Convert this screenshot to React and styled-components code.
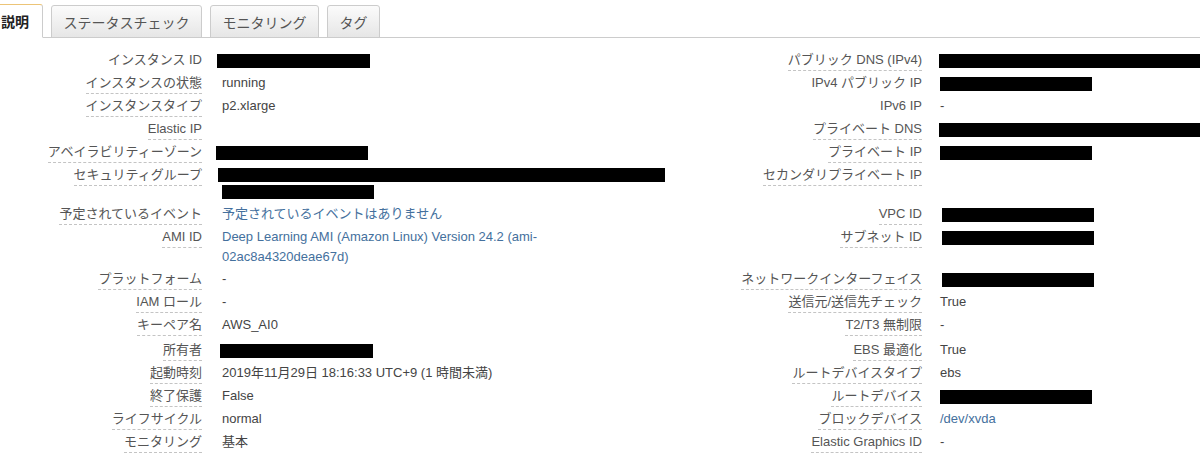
import React from 'react';
import styled, { createGlobalStyle } from 'styled-components';

const GlobalStyle = createGlobalStyle`
  html, body {
    margin: 0;
    padding: 0;
    background: #ffffff;
    overflow: hidden;
  }
  body {
    font-family: "Liberation Sans", "Noto Sans CJK JP", sans-serif;
    font-size: 13px;
    color: #444;
  }
`

const Page = styled.div`
  width: 1200px;
  overflow: hidden;
`

const TabBar = styled.div`
  display: flex;
  align-items: flex-end;
  gap: 8px;
  padding-top: 4px;
  border-bottom: 1px solid #cccccc;
  height: 33px;
`

const Tab = styled.div`
  box-sizing: border-box;
  height: ${p => (p.$active ? '34px' : '33px')};
  margin-bottom: -1px;
  padding: 0 ${p => (p.$active ? '13px' : '11.5px')};
  display: flex;
  align-items: center;
  font-size: 14px;
  border: 1px solid #cccccc;
  border-radius: 3px 3px 0 0;
  color: ${p => (p.$active ? '#222' : '#555')};
  font-weight: ${p => (p.$active ? 'bold' : 'normal')};
  background: ${p => (p.$active ? '#ffffff' : 'linear-gradient(#fbfbfb, #e6e6e6)')};
  border-bottom-color: ${p => (p.$active ? '#ffffff' : '#cccccc')};
  border-top-color: ${p => (p.$active ? '#ecc477' : '#cccccc')};
  &:first-child {
    margin-left: -13px;
  }
`

const Details = styled.div`
  margin-top: 11px;
`

const Row = styled.div`
  display: grid;
  grid-template-columns: 222px 378px 340px 1fr;
  align-items: start;
  padding-bottom: ${p => p.$extra || 0}px;
`

const LabelCell = styled.div`
  padding: 1px ${p => (p.$right ? '18px' : '20px')} 1px 0;
  text-align: right;
`

const Label = styled.span`
  display: inline-block;
  line-height: 20px;
  color: #555;
  white-space: nowrap;
  border-bottom: 1px dashed ${p => (p.$plain ? 'transparent' : '#c4c4c4')};
`

const ValueCell = styled.div`
  padding: 1px 0;
  line-height: 20px;
  color: #444;
  white-space: ${p => (p.$nowrap ? 'nowrap' : 'normal')};
`

const Link = styled.span`
  color: #44709d;
`

const Redacted = styled.span`
  display: ${p => (p.$block ? 'block' : 'inline-block')};
  width: ${p => p.$w || 152}px;
  height: 14px;
  margin-left: ${p => p.$x || 0}px;
  margin-top: ${p => (p.$block ? '3px' : '0')};
  margin-bottom: ${p => (p.$block ? '3px' : '0')};
  vertical-align: middle;
  background: #000;
`

const rows = [
  {
    l: 'インスタンス ID', lPlain: true, lv: <Redacted $x={-5} $w={153} />,
    r: 'パブリック DNS (IPv4)', rv: <Redacted $x={-1} $w={300} />,
  },
  {
    l: 'インスタンスの状態', lv: 'running',
    r: 'IPv4 パブリック IP', rPlain: true, rv: <Redacted $w={152} />,
  },
  {
    l: 'インスタンスタイプ', lv: 'p2.xlarge',
    r: 'IPv6 IP', rPlain: true, rv: '-',
  },
  {
    l: 'Elastic IP', lv: '',
    r: 'プライベート DNS', rv: <Redacted $x={-1} $w={300} />,
  },
  {
    l: 'アベイラビリティーゾーン', lv: <Redacted $x={-6} $w={152} />,
    r: 'プライベート IP', rv: <Redacted $w={152} />,
  },
  {
    l: 'セキュリティグループ',
    lv: (
      <>
        <Redacted $block $x={-4} $w={447} />
        <Redacted $block $w={152} />
      </>
    ),
    r: 'セカンダリプライベート IP', rv: '',
  },
  {
    l: '予定されているイベント', lv: <Link>予定されているイベントはありません</Link>,
    r: 'VPC ID', rv: <Redacted $x={2} $w={152} />,
  },
  {
    l: 'AMI ID',
    lv: <Link>Deep Learning AMI (Amazon Linux) Version 24.2 (ami-<wbr />02ac8a4320deae67d)</Link>,
    r: 'サブネット ID', rv: <Redacted $x={2} $w={152} />,
  },
  {
    l: 'プラットフォーム', lv: '-',
    r: 'ネットワークインターフェイス', rv: <Redacted $x={2} $w={152} />,
  },
  { l: 'IAM ロール', lv: '-', r: '送信元/送信先チェック', rv: 'True' },
  { l: 'キーペア名', lv: 'AWS_AI0', r: 'T2/T3 無制限', rv: '-', extra: 2 },
  { l: '所有者', lv: <Redacted $x={-2} $w={153} />, r: 'EBS 最適化', rv: 'True' },
  {
    l: '起動時刻', lv: '2019年11月29日 18:16:33 UTC+9 (1 時間未満)', lNowrap: true,
    r: 'ルートデバイスタイプ', rv: 'ebs',
  },
  { l: '終了保護', lv: 'False', r: 'ルートデバイス', rv: <Redacted $w={152} /> },
  { l: 'ライフサイクル', lv: 'normal', r: 'ブロックデバイス', rv: <Link>/dev/xvda</Link> },
  { l: 'モニタリング', lv: '基本', r: 'Elastic Graphics ID', rv: '-' },
]

const tabs = ['説明', 'ステータスチェック', 'モニタリング', 'タグ']

function App() {
  return (
    <Page>
      <GlobalStyle />
      <TabBar>
        {tabs.map((t, i) => (
          <Tab key={t} $active={i === 0}>{t}</Tab>
        ))}
      </TabBar>
      <Details>
        {rows.map((row, i) => (
          <Row key={i} $extra={row.extra}>
            <LabelCell>
              <Label $plain={row.lPlain}>{row.l}</Label>
            </LabelCell>
            <ValueCell $nowrap={row.lNowrap}>{row.lv}</ValueCell>
            <LabelCell $right>
              <Label $plain={row.rPlain}>{row.r}</Label>
            </LabelCell>
            <ValueCell $nowrap>{row.rv}</ValueCell>
          </Row>
        ))}
      </Details>
    </Page>
  );
}

export default App
